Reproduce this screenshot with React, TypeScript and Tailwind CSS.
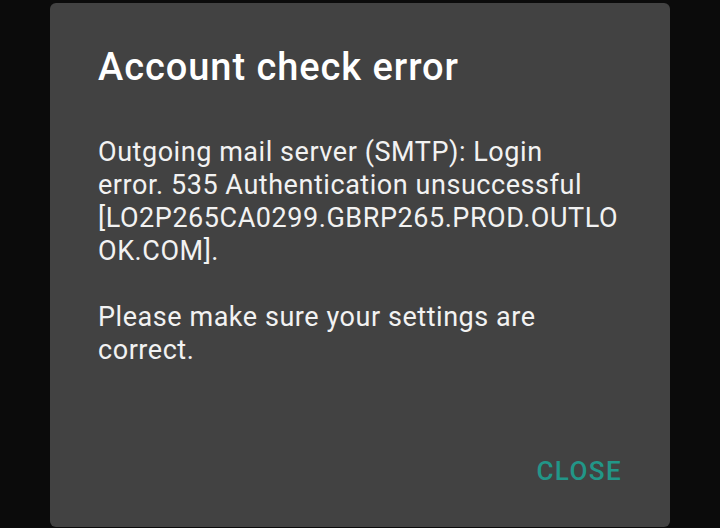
export default function App() {
  return (
    <div className="w-[720px] h-[528px] overflow-hidden bg-[#0b0b0b] px-[50px] pt-[3px] font-['Roboto',sans-serif] antialiased">
      {/* Dialog */}
      <div className="h-[524px] rounded-[6px] bg-[#424242] px-[48px] pt-[40px] flex flex-col">
        <h1 className="text-[38px] leading-[48px] font-medium tracking-[0.95px] text-white">Account check error</h1>

        <div className="mt-[45px] text-[27px] leading-[33px] tracking-[0.55px] text-[#f2f2f2]">
          <p>
            Outgoing mail server (SMTP): Login
            <br />
            error. 535 Authentication unsuccessful
            <br />
            [LO2P265CA0299.GBRP265.PROD.OUTLO
            <br />
            OK.COM].
          </p>
          <p className="mt-[33px]">
            Please make sure your settings are
            <br />
            correct.
          </p>
        </div>

        <div className="mt-auto mb-[36px] flex justify-end">
          <button className="text-[26px] font-medium tracking-[1.4px] text-[#229688] uppercase">
            Close
          </button>
        </div>
      </div>
    </div>
  )
}
